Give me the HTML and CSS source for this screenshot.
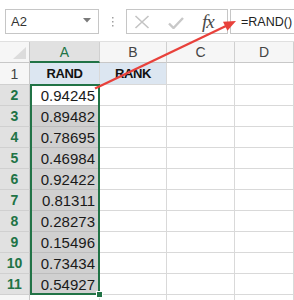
FILE: index.html
```html
<!DOCTYPE html>
<html lang="en">
<head>
    <meta charset="UTF-8">
    <title>RAND</title>
    <link rel="stylesheet" href="styles.css">
</head>
<body>

<div class="app">
    <div class="formula-bar">
        <div class="name-box">
            <span>A2</span>
            <svg class="caret" width="8" height="5" viewBox="0 0 8 5"><path d="M0 0 H8 L4 4.5 Z" fill="#7a7a7a"/></svg>
        </div>
        <div class="grip">
            <svg width="3" height="12" viewBox="0 0 3 12">
                <rect x="1" y="0" width="1.5" height="1.5" fill="#a0a0a0"/>
                <rect x="1" y="4" width="1.5" height="1.5" fill="#a0a0a0"/>
                <rect x="1" y="8" width="1.5" height="1.5" fill="#a0a0a0"/>
            </svg>
        </div>
        <div class="fx-buttons">
            <svg class="btn-x" width="16" height="14" viewBox="0 0 16 14"><path d="M1.5 1 L14.5 13 M14.5 1 L1.5 13" stroke="#c4c4c4" stroke-width="1.6" fill="none"/></svg>
            <svg class="btn-ok" width="16" height="12" viewBox="0 0 16 12"><path d="M1 6.5 L5.5 11 L15 1" stroke="#c8c8c8" stroke-width="2.4" fill="none"/></svg>
            <span class="fx">fx</span>
        </div>
        <div class="formula-input">=RAND()</div>
    </div>

    <div class="sheet">
        <div class="corner"><span class="corner-tri"></span></div>
        <div class="col-head active">A</div>
        <div class="col-head">B</div>
        <div class="col-head">C</div>
        <div class="col-head">D</div>

        <div class="row-head">1</div>
        <div class="cell title">RAND</div>
        <div class="cell title">RANK</div>
        <div class="cell"></div>
        <div class="cell"></div>

        <div class="row-head active">2</div>
        <div class="cell num first">0.94245</div>
        <div class="cell"></div><div class="cell"></div><div class="cell"></div>

        <div class="row-head active">3</div>
        <div class="cell num">0.89482</div>
        <div class="cell"></div><div class="cell"></div><div class="cell"></div>

        <div class="row-head active">4</div>
        <div class="cell num">0.78695</div>
        <div class="cell"></div><div class="cell"></div><div class="cell"></div>

        <div class="row-head active">5</div>
        <div class="cell num">0.46984</div>
        <div class="cell"></div><div class="cell"></div><div class="cell"></div>

        <div class="row-head active">6</div>
        <div class="cell num">0.92422</div>
        <div class="cell"></div><div class="cell"></div><div class="cell"></div>

        <div class="row-head active">7</div>
        <div class="cell num">0.81311</div>
        <div class="cell"></div><div class="cell"></div><div class="cell"></div>

        <div class="row-head active">8</div>
        <div class="cell num">0.28273</div>
        <div class="cell"></div><div class="cell"></div><div class="cell"></div>

        <div class="row-head active">9</div>
        <div class="cell num">0.15496</div>
        <div class="cell"></div><div class="cell"></div><div class="cell"></div>

        <div class="row-head active">10</div>
        <div class="cell num">0.73434</div>
        <div class="cell"></div><div class="cell"></div><div class="cell"></div>

        <div class="row-head active">11</div>
        <div class="cell num">0.54927</div>
        <div class="cell"></div><div class="cell"></div><div class="cell"></div>

        <div class="row-head"></div>
        <div class="cell"></div>
        <div class="cell"></div><div class="cell"></div><div class="cell"></div>

        <!-- selected range A2:A11 -->
        <div class="selection"><span class="fill-handle"></span></div>
    </div>

    <!-- callout arrow to the formula -->
    <svg class="arrow" width="294" height="300" viewBox="0 0 294 300">
        <line x1="95" y1="88.5" x2="227" y2="25.5" stroke="#e8413b" stroke-width="2.4"/>
        <polygon points="236,21 227.4,30.7 223,21.7" fill="#e8413b"/>
    </svg>
</div>

</body>
</html>
```

FILE: styles.css
```css
* {
    margin: 0;
    padding: 0;
    box-sizing: border-box;
}

body {
    font-family: 'Liberation Sans', Arial, sans-serif;
    background: #ffffff;
    width: 294px;
    height: 300px;
    overflow: hidden;
}

.app {
    position: relative;
    width: 294px;
    height: 300px;
    overflow: hidden;
}

/* Formula bar */
.formula-bar {
    height: 41px;
    display: flex;
    align-items: flex-start;
    padding-top: 9px;
    padding-left: 5px;
    background: #ffffff;
}

.name-box {
    width: 94px;
    height: 25px;
    border: 1px solid #c6c6c6;
    display: flex;
    align-items: center;
    justify-content: space-between;
    padding: 0 7px 0 5px;
    font-size: 13px;
    color: #333;
}

.caret {
    margin-top: -2px;
}

.grip {
    width: 27px;
    height: 25px;
    display: flex;
    align-items: center;
    justify-content: center;
    padding-top: 2px;
}

.fx-buttons {
    width: 102px;
    height: 25px;
    border: 1px solid #c6c6c6;
    display: flex;
    align-items: center;
    padding-left: 6px;
}

.btn-x {
    margin-left: 1px;
}

.btn-ok {
    margin-left: 18px;
    margin-top: 3px;
}

.fx {
    margin-left: 18px;
    font-family: 'Liberation Serif', 'Times New Roman', serif;
    font-style: italic;
    font-size: 19px;
    color: #4a4a4a;
    letter-spacing: -1px;
}

.formula-input {
    flex: 1;
    height: 25px;
    margin-left: 2px;
    border: 1px solid #c6c6c6;
    border-right: none;
    display: flex;
    align-items: center;
    padding-left: 10px;
    font-size: 12.5px;
    color: #222;
}

/* Sheet grid */
.sheet {
    position: relative;
    display: grid;
    grid-template-columns: 30px 70px 67px 68px 59px;
    grid-template-rows: 21px 22px repeat(11, 21px);
    border-top: 1px solid #e0e0e0;
}

.corner {
    background: #f6f6f6;
    border-right: 1px solid #c8c8c8;
    border-bottom: 1px solid #c8c8c8;
    position: relative;
}

.corner-tri {
    position: absolute;
    right: 3px;
    bottom: 3px;
    width: 13px;
    height: 12px;
    background: #dcdcdc;
    clip-path: polygon(100% 0, 100% 100%, 0 100%);
}

.col-head {
    background: #f6f6f6;
    border-right: 1px solid #d0d0d0;
    border-bottom: 1px solid #c8c8c8;
    display: flex;
    align-items: center;
    justify-content: center;
    font-size: 14px;
    color: #444;
}

.col-head.active {
    background: #e1e1e1;
    color: #217346;
    border-bottom: 2px solid #217346;
}

.row-head {
    background: #f6f6f6;
    border-right: 1px solid #c8c8c8;
    border-bottom: 1px solid #d0d0d0;
    display: flex;
    align-items: center;
    justify-content: center;
    font-size: 14px;
    color: #444;
}

.row-head.active {
    background: #e1e1e1;
    color: #217346;
    font-weight: bold;
}

.cell {
    border-right: 1px solid #d9d9d9;
    border-bottom: 1px solid #d9d9d9;
    display: flex;
    align-items: center;
    font-size: 14px;
    color: #111;
}

.cell.title {
    background: #dce6f1;
    justify-content: center;
    font-weight: bold;
    font-size: 13px;
    letter-spacing: -0.4px;
}

.cell.num {
    background: #d0d0d0;
    justify-content: flex-end;
    padding-right: 4px;
    font-size: 15px;
    color: #1a1a1a;
    border-bottom-color: #bdbdbd;
}

.cell.num.first {
    background: #ffffff;
}

.selection {
    position: absolute;
    left: 30px;
    top: 42px;
    width: 70px;
    height: 211px;
    border: 2px solid #217346;
    pointer-events: none;
}

.fill-handle {
    position: absolute;
    right: -5px;
    bottom: -5px;
    width: 7px;
    height: 7px;
    background: #217346;
    border: 1px solid #ffffff;
}

.arrow {
    position: absolute;
    left: 0;
    top: 0;
    pointer-events: none;
}
```
